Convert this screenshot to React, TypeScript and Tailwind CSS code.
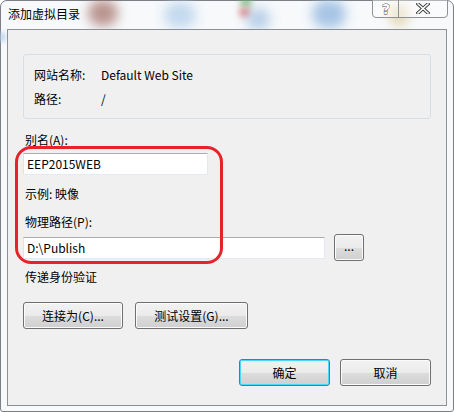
import React from "react"

const font = { fontFamily: '"Noto Sans CJK SC", "Noto Sans", sans-serif' }

function WinButton({ label, className = "", focused = false }: { label: string; className?: string; focused?: boolean }) {
  return (
    <button
      className={
        "relative rounded-[3px] border text-[12px] leading-none text-black " +
        (focused
          ? "border-[#3c7fb1] shadow-[inset_0_0_0_1px_#48d9f8] "
          : "border-[#707070] shadow-[inset_0_0_0_1px_#fbfbfb] ") +
        "bg-[linear-gradient(#f2f2f2_0%,#ebebeb_50%,#dddddd_51%,#cfcfcf_100%)] " +
        className
      }
    >
      {label}
    </button>
  )
}

function TextBox({ value, className = "" }: { value: string; className?: string }) {
  return (
    <div
      className={
        "flex h-[22px] items-center border border-[#abadb3] border-r-[#e3e9ef] border-b-[#e3e9ef] border-l-[#e2e3ea] bg-white pl-[3px] text-[12px] text-black " +
        className
      }
    >
      {value}
    </div>
  )
}

export default function App() {
  return (
    <div className="relative h-[412px] w-[454px] overflow-hidden bg-white" style={font}>
      {/* Aero glass frame with blurred desktop behind it */}
      <div className="absolute inset-0 rounded-t-[7px] rounded-b-[3px] border border-[#7b7f86] bg-[#f7f9fb]" />
      <div className="absolute left-[88px] top-[0px] h-[26px] w-[30px] rounded-full bg-[#a06a62] opacity-70 blur-[6px]" />
      <div className="absolute left-[164px] top-[2px] h-[26px] w-[32px] rounded-full bg-[#b7d2ec] opacity-80 blur-[6px]" />
      <div className="absolute left-[240px] top-[-2px] h-[9px] w-[12px] rounded-full bg-[#6fb06f] opacity-80 blur-[3px]" />
      <div className="absolute left-[239px] top-[8px] h-[9px] w-[12px] rounded-full bg-[#d86a6a] opacity-80 blur-[3px]" />
      <div className="absolute left-[246px] top-[8px] h-[22px] w-[24px] rounded-full bg-[#a9c6e4] opacity-80 blur-[6px]" />
      <div className="absolute left-[312px] top-[0px] h-[28px] w-[34px] rounded-full bg-[#93b8e0] opacity-80 blur-[6px]" />
      <div className="absolute left-[390px] top-[4px] h-[22px] w-[18px] rounded-full bg-[#d8c48c] opacity-70 blur-[6px]" />
      <div className="absolute left-[0px] top-[32px] h-[10px] w-[5px] rounded-full bg-[#b9d2ee] blur-[2px]" />

      <div className="relative flex h-full flex-col">
        {/* title bar */}
        <div className="flex h-[29px] items-start justify-between">
          <div className="pl-[8px] pt-[6px] text-[12px] leading-[16px] text-black">添加虚拟目录</div>
          <div className="mr-[6px] flex h-[19px] -mt-px rounded-b-[4px] border border-[#8e9196] bg-white/40">
            <div className="flex w-[26px] items-center justify-center border-r border-[#8e9196]">
              <svg width="12" height="14" viewBox="0 0 12 14">
                <text x="6" y="12" textAnchor="middle" fontSize="14" fontWeight="bold" fill="#ffffff" stroke="#3a3a3a" strokeWidth="0.8" paintOrder="stroke" fontFamily="DejaVu Sans, sans-serif">?</text>
              </svg>
            </div>
            <div className="flex w-[48px] items-center justify-center">
              <svg width="14" height="11" viewBox="0 0 14 11">
                <path d="M2 1 L12 10 M12 1 L2 10" stroke="#3a3a3a" strokeWidth="3.4" strokeLinecap="square" />
                <path d="M2 1 L12 10 M12 1 L2 10" stroke="#ffffff" strokeWidth="1.6" strokeLinecap="square" />
              </svg>
            </div>
          </div>
        </div>

        {/* client area */}
        <div className="mx-[7px] mb-[6px] flex flex-1 flex-col border border-[#8b9097] bg-[#f0f0f0] px-[15px] text-[12px] leading-[16px] text-black">
          <div className="mt-[24px] h-[65px] rounded-[3px] border border-[#d5dfe5] pl-[10px]">
            <div className="mt-[12px] flex">
              <span className="w-[67px]">网站名称:</span>
              <span>Default Web Site</span>
            </div>
            <div className="mt-[8px] flex">
              <span className="w-[67px]">路径:</span>
              <span>/</span>
            </div>
          </div>

          <div className="mt-[13px] pl-[2px]">别名(A):</div>
          <TextBox value="EEP2015WEB" className="mt-[5px] w-[185px]" />

          <div className="mt-[11px] pl-[2px]">示例: 映像</div>
          <div className="mt-[12px] pl-[2px]">物理路径(P):</div>

          <div className="mt-[4px] flex h-[27px] items-center">
            <TextBox value="D:\Publish" className="w-[302px]" />
            <WinButton label="..." className="ml-[9px] h-[27px] w-[30px] pb-[3px]" />
          </div>

          <div className="mt-[8px] pl-[2px]">传递身份验证</div>

          <div className="mt-[17px] flex gap-[12px]">
            <WinButton label="连接为(C)..." className="h-[27px] w-[100px]" />
            <WinButton label="测试设置(G)..." className="h-[27px] w-[113px]" />
          </div>

          <div className="mt-[30px] flex justify-end gap-[10px]">
            <WinButton label="确定" focused className="h-[27px] w-[91px]" />
            <WinButton label="取消" className="h-[27px] w-[91px]" />
          </div>
        </div>
      </div>

      {/* red annotation */}
      <div className="absolute left-[15px] top-[146px] h-[118px] w-[208px] rounded-[16px] border-[3px] border-[#e8222b]" />
    </div>
  )
}
